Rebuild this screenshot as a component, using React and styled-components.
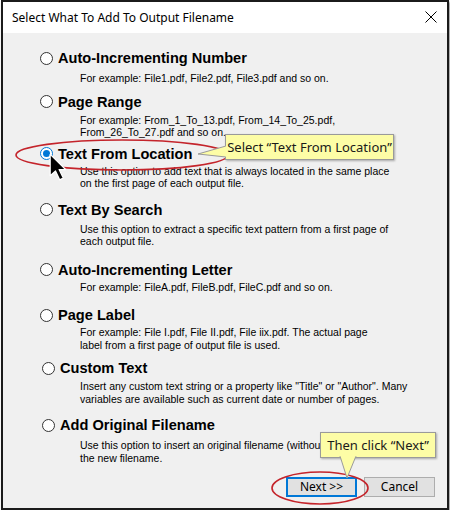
import React from 'react';
import styled, { createGlobalStyle } from 'styled-components';

const options = [
  { id: 1, title: 'Auto-Incrementing Number', gap: 0, descGap: 5, lines: ['For example: File1.pdf, File2.pdf, File3.pdf and so on.'] },
  { id: 2, title: 'Page Range', gap: 8, descGap: 3, lines: ['For example: From_1_To_13.pdf, From_14_To_25.pdf,', 'From_26_To_27.pdf and so on.'] },
  { id: 3, title: 'Text From Location', gap: 6, descGap: 2, checked: true, lines: ['Use this option to add text that is always located in the same place', 'on the first page of each output file.'] },
  { id: 4, title: 'Text By Search', gap: 11, descGap: 4, lines: ['Use this option to extract a specific text pattern from a first page of', 'each output file.'] },
  { id: 5, title: 'Auto-Incrementing Letter', gap: 13, descGap: 2, lines: ['For example: FileA.pdf, FileB.pdf, FileC.pdf and so on.'] },
  { id: 6, title: 'Page Label', gap: 13, descGap: 2, lines: ['For example: File I.pdf, File II.pdf, File iix.pdf. The actual page', 'label from a first page of output file is used.'] },
  { id: 7, title: 'Custom Text', gap: 8, descGap: 3, shift: 2, lines: ['Insert any custom text string or a property like "Title" or "Author". Many', 'variables are available such as current date or number of pages.'] },
  { id: 8, title: 'Add Original Filename', gap: 11, descGap: 5, shift: 2, lines: ['Use this option to insert an original filename (without', 'the new filename.'] },
];

const App = () => {
  return (
    <>
      <GlobalStyle />
      <Window>
        <TitleBar>
          <TitleText>Select What To Add To Output Filename</TitleText>
          <CloseIcon width="12" height="12" viewBox="0 0 12 12">
            <path d="M0.5 0.5 L11.5 11.5 M11.5 0.5 L0.5 11.5" stroke="#000" strokeWidth="1" />
          </CloseIcon>
        </TitleBar>

        <Body>
          {options.map((opt) => (
            <Option key={opt.id} $gap={opt.gap}>
              <OptionHead $shift={opt.shift || 0}>
                <Radio $checked={opt.checked} />
                <OptionTitle>{opt.title}</OptionTitle>
              </OptionHead>
              <Desc $gap={opt.descGap}>
                {opt.lines.map((line, i) => (
                  <DescLine key={i}>{line}</DescLine>
                ))}
              </Desc>
            </Option>
          ))}

          <Footer>
            <Button $focused>Next &gt;&gt;</Button>
            <Button>Cancel</Button>
          </Footer>
        </Body>

        {/* annotations drawn over the dialog */}
        <Overlay viewBox="0 0 444 506">
          <ellipse cx="119" cy="153" rx="106" ry="15" fill="none" stroke="#c4242b" strokeWidth="1.6" />
          <ellipse cx="317" cy="486" rx="48" ry="16" fill="none" stroke="#c4242b" strokeWidth="1.6" />
        </Overlay>

        <Callout $left={222} $top={132} $width={169}>
          Select “Text From Location”
          <TailLeft width="30" height="14" viewBox="0 0 30 14">
            <path d="M29 2 L1 10 L29 13" fill="#fdfda6" stroke="#9a9a9a" strokeWidth="1" />
            <rect x="28.5" y="2.5" width="2" height="10" fill="#fdfda6" />
          </TailLeft>
        </Callout>

        <Callout $left={317} $top={430} $width={116}>
          Then click “Next”
          <TailDown width="18" height="24" viewBox="0 0 18 24">
            <path d="M1 0 L8 22 L17 0" fill="#fdfda6" stroke="#9a9a9a" strokeWidth="1" />
            <rect x="1.5" y="-1" width="15" height="1.5" fill="#fdfda6" />
          </TailDown>
        </Callout>

        <Cursor width="19" height="30" viewBox="0 0 16 25">
          <path d="M1 1 L1 19 L5.5 15 L9 22.5 L12 21 L8.5 13.8 L14 13.8 Z" fill="#000" stroke="#fff" strokeWidth="1" strokeLinejoin="round" />
        </Cursor>
      </Window>
    </>
  );
};

export default App;

const GlobalStyle = createGlobalStyle`
  html, body {
    margin: 0;
    padding: 0;
    background: #ffffff;
  }
`;

const Window = styled.div`
  position: relative;
  box-sizing: border-box;
  margin-left: 1px;
  width: 448px;
  height: 510px;
  border: 2px solid #1b1b1b;
  background: #f0f0f0;
  box-shadow: 1px 2px 2px rgba(0, 0, 0, 0.45);
  display: flex;
  flex-direction: column;
  font-family: "Noto Sans", "Liberation Sans", sans-serif;
`;

const TitleBar = styled.div`
  height: 30px;
  flex-shrink: 0;
  background: #ffffff;
  display: flex;
  align-items: center;
  justify-content: space-between;
  padding: 0 9px 1px 9px;
`;

const TitleText = styled.span`
  font-size: 12px;
  color: #000;
`;

const CloseIcon = styled.svg`
  margin-right: 1px;
`;

const Body = styled.div`
  flex: 1;
  display: flex;
  flex-direction: column;
  padding: 16px 12px 11px 37px;
`;

const Option = styled.div`
  margin-top: ${(p) => p.$gap}px;
`;

const OptionHead = styled.div`
  display: flex;
  align-items: center;
  height: 18px;
  gap: 5px;
  padding-left: ${(p) => p.$shift}px;
`;

const Radio = styled.span`
  box-sizing: border-box;
  width: 13px;
  height: 13px;
  border-radius: 50%;
  border: 1px solid ${(p) => (p.$checked ? '#0078d7' : '#333333')};
  background: #ffffff;
  display: flex;
  align-items: center;
  justify-content: center;
  &::after {
    content: '';
    width: 7px;
    height: 7px;
    border-radius: 50%;
    background: ${(p) => (p.$checked ? '#0078d7' : 'transparent')};
  }
`;

const OptionTitle = styled.span`
  font-family: "Liberation Sans", Arial, sans-serif;
  font-weight: bold;
  font-size: 14.6px;
  color: #000;
`;

const Desc = styled.div`
  margin-top: ${(p) => p.$gap}px;
  padding-left: 40px;
`;

const DescLine = styled.div`
  font-family: "Liberation Sans", Arial, sans-serif;
  font-size: 10.5px;
  line-height: 12.5px;
  color: #000;
  white-space: nowrap;
`;

const Footer = styled.div`
  margin-top: auto;
  display: flex;
  justify-content: flex-end;
  gap: 7px;
`;

const Button = styled.button`
  box-sizing: border-box;
  width: 71px;
  height: 20px;
  padding: 0;
  background: #e1e1e1;
  border: ${(p) => (p.$focused ? '2px solid #0078d7' : '1px solid #adadad')};
  font-family: "Noto Sans", "Liberation Sans", sans-serif;
  font-size: 12px;
  color: #000;
  line-height: 1;
`;

const Overlay = styled.svg`
  position: absolute;
  left: 0;
  top: 0;
  width: 444px;
  height: 506px;
  pointer-events: none;
`;

const Callout = styled.div`
  position: absolute;
  left: ${(p) => p.$left}px;
  top: ${(p) => p.$top}px;
  width: ${(p) => p.$width}px;
  height: 26px;
  box-sizing: border-box;
  background: #fdfda6;
  border: 1px solid #9a9a9a;
  box-shadow: 1px 1px 2px rgba(0, 0, 0, 0.3);
  display: flex;
  align-items: center;
  justify-content: center;
  font-family: "Noto Sans", "Liberation Sans", sans-serif;
  font-size: 13px;
  color: #1a1a1a;
  white-space: nowrap;
`;

const TailLeft = styled.svg`
  position: absolute;
  left: -29px;
  top: 9px;
  overflow: visible;
`;

const TailDown = styled.svg`
  position: absolute;
  left: 18px;
  bottom: -23px;
  overflow: visible;
`;

const Cursor = styled.svg`
  position: absolute;
  left: 46px;
  top: 151px;
`;
